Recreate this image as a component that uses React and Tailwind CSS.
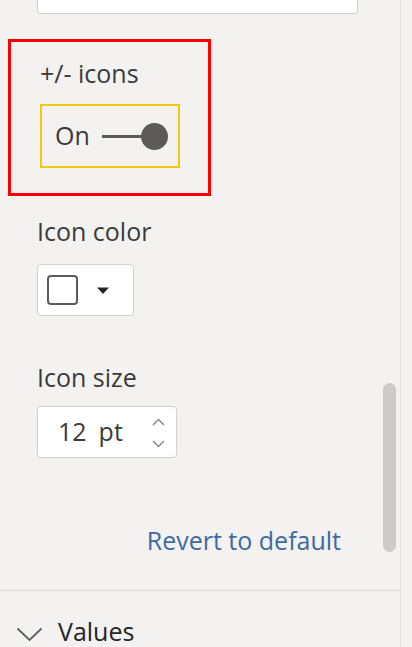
const font = { fontFamily: '"Open Sans", "Noto Sans", sans-serif' }

function Label({ children, className = '' }) {
  return <div className={`text-[25px] leading-[30px] text-[#3b3a39] ${className}`}>{children}</div>
}

function Chevron({ up }) {
  return (
    <svg width="13" height="8" viewBox="0 0 13 8">
      <path d={up ? 'M1 7 L6.5 1.5 L12 7' : 'M1 1 L6.5 6.5 L12 1'} fill="none" stroke="#8a8886" strokeWidth="1.5" />
    </svg>
  )
}

export default function App() {
  return (
    <div className="flex h-[647px] w-[412px] overflow-hidden bg-[#f3f2f1]" style={font}>
      <div className="flex w-[401px] flex-col border-r border-[#e1dfdd]">
        <div className="flex h-[590px] shrink-0">
          <div className="flex flex-1 flex-col">
            {/* bottom of the field above */}
            <div className="ml-[37px] h-[14px] w-[321px] rounded-b border border-t-0 border-[#d2d0ce] bg-white" />

            {/* highlighted toggle */}
            <div className="ml-[8px] mt-[25px] h-[157px] w-[203px] border-[3px] border-[#ff0000] pl-[29px] pt-[16px]">
              <Label>+/- icons</Label>
              <div className="mt-[16px] flex h-[64px] w-[140px] items-center border-2 border-[#f2c811] pl-[13px]">
                <span className="text-[25px] text-[#3b3a39]">On</span>
                <div className="ml-[12px] flex items-center">
                  <div className="h-[3px] w-[42px] bg-[#5c5b5a]" />
                  <div className="-ml-[3px] h-[27px] w-[27px] rounded-full bg-[#5c5b5a]" />
                </div>
              </div>
            </div>

            <Label className="ml-[37px] mt-[20px]">Icon color</Label>
            <div className="ml-[37px] mt-[18px] flex h-[52px] w-[97px] items-center rounded border border-[#d2d0ce] bg-white pl-[9px]">
              <div className="h-[30px] w-[31px] rounded-sm border-2 border-[#5c5b5a] bg-white" />
              <svg width="14" height="9" viewBox="0 0 14 9" className="ml-[18px]">
                <path d="M1 1.5 L13 1.5 L7 8 Z" fill="#252423" />
              </svg>
            </div>

            <Label className="ml-[37px] mt-[46px]">Icon size</Label>
            <div className="ml-[37px] mt-[14px] flex h-[52px] w-[140px] items-center rounded border border-[#d2d0ce] bg-white pl-[20px]">
              <span className="text-[25px] text-[#3b3a39]">12</span>
              <span className="ml-[12px] text-[25px] text-[#3b3a39]">pt</span>
              <div className="ml-auto mr-[11px] mt-[2px] flex flex-col items-center gap-[14px]">
                <Chevron up />
                <Chevron />
              </div>
            </div>

            <div className="mt-auto mb-[31px] mr-[42px] text-right text-[25px] text-[#3d6aa1]">Revert to default</div>
          </div>

          {/* scrollbar */}
          <div className="w-[17px] pt-[383px]">
            <div className="h-[169px] w-[13px] rounded-full bg-[#cdcbc9]" />
          </div>
        </div>

        <div className="h-px w-full shrink-0 bg-[#dcdad8]" />

        <div className="flex items-center pl-[16px] pt-[22px]">
          <svg width="27" height="15" viewBox="0 0 27 15" className="mt-[6px]">
            <path d="M1.5 1.5 L13.5 13 L25.5 1.5" fill="none" stroke="#605e5c" strokeWidth="1.8" />
          </svg>
          <span className="ml-[15px] text-[25px] text-[#252423]">Values</span>
        </div>
      </div>
      <div className="flex-1 bg-[#f3f2f1]" />
    </div>
  )
}
